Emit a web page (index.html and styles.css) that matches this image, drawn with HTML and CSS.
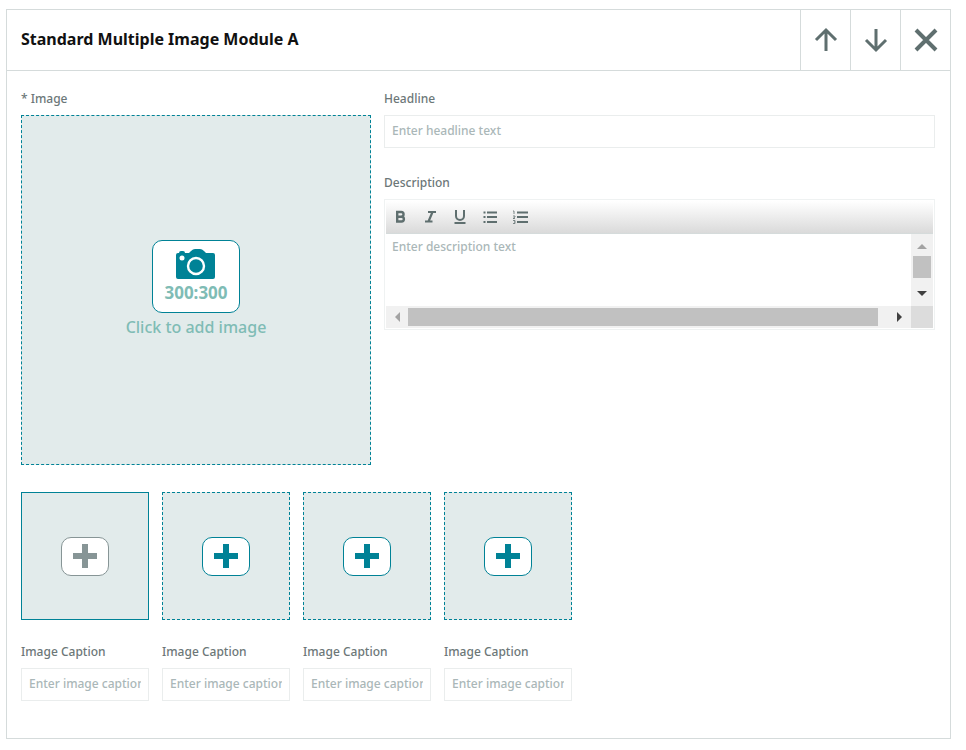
FILE: index.html
```html
<!DOCTYPE html>
<html lang="en">
<head>
<meta charset="utf-8">
<meta name="viewport" content="width=device-width, initial-scale=1">
<title>Standard Multiple Image Module A</title>
<link rel="stylesheet" href="styles.css">
</head>
<body>
<section class="module">
  <header class="module-header">
    <h1 class="module-title">Standard Multiple Image Module A</h1>
    <button class="header-button" type="button" aria-label="Move up">
      <svg width="24" height="26" viewBox="0 0 24 26"><path d="M12 24V3M2 13L12 3l10 10" fill="none" stroke="currentColor" stroke-width="3"/></svg>
    </button>
    <button class="header-button" type="button" aria-label="Move down">
      <svg width="24" height="26" viewBox="0 0 24 26"><path d="M12 2v21M2 13l10 10 10-10" fill="none" stroke="currentColor" stroke-width="3"/></svg>
    </button>
    <button class="header-button" type="button" aria-label="Remove module">
      <svg width="24" height="26" viewBox="0 0 24 26"><path d="M2 3l20 20M22 3L2 23" fill="none" stroke="currentColor" stroke-width="4"/></svg>
    </button>
  </header>

  <div class="module-body">
    <div class="main-row">
      <div class="image-column">
        <label class="field-label" for="main-image">* Image</label>
        <button class="image-drop" id="main-image" type="button">
          <span class="size-badge">
            <svg width="40" height="32" viewBox="0 0 40 32">
              <path d="M3 4q0-2 2-2h2q2 0 2 2h4l2-2q2-2 4-2h5q2 0 4 2l2 2h7q2 0 2 2v22q0 2-2 2H2q-2 0-2-2V6q0-2 2-2z" fill="#008296"/>
              <circle cx="20" cy="17" r="8" fill="none" stroke="#fff" stroke-width="2.400"/>
              <circle cx="6" cy="9" r="2.500" fill="#fff"/>
            </svg>
            <span class="size-text">300:300</span>
          </span>
          <span class="drop-text">Click to add image</span>
        </button>
      </div>

      <div class="text-column">
        <div class="field">
          <label class="field-label" for="headline">Headline</label>
          <input class="text-input" id="headline" type="text" placeholder="Enter headline text">
        </div>
        <div class="field">
          <label class="field-label" for="description">Description</label>
          <div class="editor">
            <div class="toolbar">
              <button class="tool" type="button" aria-label="Bold">
                <svg width="16" height="16" viewBox="0 0 16 16"><path d="M5.200 3h4a2.200 2.200 0 0 1 0 4.700h-4zM5.200 7.700h4.300a2.400 2.400 0 0 1 0 4.800H5.200z" fill="none" stroke="currentColor" stroke-width="2.400"/></svg>
              </button>
              <button class="tool" type="button" aria-label="Italic">
                <svg width="16" height="16" viewBox="0 0 16 16"><path d="M6 3h8M3 12.500h7.500M10.500 3L6.500 12.500" fill="none" stroke="currentColor" stroke-width="2.200"/></svg>
              </button>
              <button class="tool" type="button" aria-label="Underline">
                <svg width="16" height="16" viewBox="0 0 16 16"><path d="M4 1v6a4 4 0 0 0 8 0V1" fill="none" stroke="currentColor" stroke-width="2"/><path d="M2.500 14h11" stroke="currentColor" stroke-width="2"/></svg>
              </button>
              <button class="tool" type="button" aria-label="Bulleted list">
                <svg width="16" height="16" viewBox="0 0 16 16"><path d="M1.500 3.500h2M1.500 8h2M1.500 13h2M5 3.500h10M5 8h10M5 13h10" stroke="currentColor" stroke-width="2"/></svg>
              </button>
              <button class="tool" type="button" aria-label="Numbered list">
                <svg width="16" height="16" viewBox="0 0 16 16"><path d="M5 3.500h11M5 8h11M5 13h11" stroke="currentColor" stroke-width="2"/><path d="M1 2h1v3M1 7h2v1l-2 1.500h2M1 11.500h2v3H1M3 13H2" fill="none" stroke="currentColor" stroke-width=".8"/></svg>
              </button>
            </div>
            <div class="edit-area">
              <textarea class="edit-text" id="description" placeholder="Enter description text"></textarea>
              <div class="scroll-y">
                <svg width="10" height="5" viewBox="0 0 10 5"><path d="M0 5l5-5 5 5z" fill="#a3a3a3"/></svg>
                <div class="thumb-y"></div>
                <svg width="10" height="5" viewBox="0 0 10 5"><path d="M0 0l5 5 5-5z" fill="#404040"/></svg>
              </div>
              <div class="scroll-x">
                <svg width="5" height="10" viewBox="0 0 5 10"><path d="M5 0L0 5l5 5z" fill="#a3a3a3"/></svg>
                <div class="thumb-x"></div>
                <svg width="5" height="10" viewBox="0 0 5 10"><path d="M0 0l5 5-5 5z" fill="#404040"/></svg>
              </div>
              <div class="scroll-corner"></div>
            </div>
          </div>
        </div>
      </div>
    </div>

    <div class="thumb-row">
      <div class="thumb-item">
        <button class="thumb thumb-selected" type="button" aria-label="Add image 1"><span class="plus"><svg width="24" height="24" viewBox="0 0 24 24"><path d="M12 0v24M0 12h24" stroke="currentColor" stroke-width="6"/></svg></span></button>
        <label class="field-label" for="caption-1">Image Caption</label>
        <input class="text-input" id="caption-1" type="text" placeholder="Enter image caption">
      </div>
      <div class="thumb-item">
        <button class="thumb" type="button" aria-label="Add image 2"><span class="plus"><svg width="24" height="24" viewBox="0 0 24 24"><path d="M12 0v24M0 12h24" stroke="currentColor" stroke-width="6"/></svg></span></button>
        <label class="field-label" for="caption-2">Image Caption</label>
        <input class="text-input" id="caption-2" type="text" placeholder="Enter image caption">
      </div>
      <div class="thumb-item">
        <button class="thumb" type="button" aria-label="Add image 3"><span class="plus"><svg width="24" height="24" viewBox="0 0 24 24"><path d="M12 0v24M0 12h24" stroke="currentColor" stroke-width="6"/></svg></span></button>
        <label class="field-label" for="caption-3">Image Caption</label>
        <input class="text-input" id="caption-3" type="text" placeholder="Enter image caption">
      </div>
      <div class="thumb-item">
        <button class="thumb" type="button" aria-label="Add image 4"><span class="plus"><svg width="24" height="24" viewBox="0 0 24 24"><path d="M12 0v24M0 12h24" stroke="currentColor" stroke-width="6"/></svg></span></button>
        <label class="field-label" for="caption-4">Image Caption</label>
        <input class="text-input" id="caption-4" type="text" placeholder="Enter image caption">
      </div>
    </div>
  </div>
</section>
</body>
</html>
```
FILE: styles.css
```css
* {
  box-sizing: border-box;
}

body {
  margin: 9px 15px 12px 6px;
  background: #fff;
  color: #6c7778;
  font-family: "Noto Sans", "Open Sans", sans-serif;
  font-size: 12px;
  font-weight: 500;
}

button,
input,
textarea {
  margin: 0;
  font: inherit;
}

svg {
  display: block;
  flex: none;
}

.module {
  border: 1px solid #d5dbdb;
}

.module-header {
  display: flex;
  height: 61px;
  border-bottom: 1px solid #d5dbdb;
}

.module-title {
  flex: 1;
  margin: 0;
  padding: 0 14px;
  color: #111;
  font-size: 16px;
  font-weight: 700;
  line-height: 58px;
}

.header-button {
  display: flex;
  align-items: center;
  justify-content: center;
  width: 50px;
  padding: 0;
  border: 0;
  border-left: 1px solid #d5dbdb;
  background: #fff;
  color: #5f6f6f;
}

.module-body {
  padding: 19px 15px 37px 14px;
}

.main-row {
  display: flex;
  gap: 13px;
}

.image-column {
  flex: none;
  width: 350px;
}

.text-column {
  flex: 1;
  display: flex;
  flex-direction: column;
  gap: 26px;
  min-width: 0;
}

.field-label {
  display: block;
  margin-bottom: 7px;
  line-height: 18px;
}

.image-drop {
  display: flex;
  flex-direction: column;
  align-items: center;
  justify-content: center;
  width: 100%;
  aspect-ratio: 1;
  padding: 0;
  border: 1px dashed #008296;
  background: #e2ebeb;
}

.size-badge {
  display: flex;
  flex-direction: column;
  align-items: center;
  width: 88px;
  height: 73px;
  padding-top: 8px;
  border: 1px solid #008296;
  border-radius: 10px;
  background: #fff;
}

.size-text {
  color: #7fbcb5;
  font-size: 17px;
  font-weight: 700;
  line-height: 24px;
}

.drop-text {
  color: #7fbcb5;
  font-size: 16px;
  line-height: 28px;
}

.text-input {
  display: block;
  width: 100%;
  height: 33px;
  padding: 0 7px 3px;
  border: 1px solid #eaeded;
  background: #fff;
}

.text-input::placeholder,
.edit-text::placeholder {
  color: #aab7b8;
  opacity: 1;
}

.editor {
  padding: 1px;
  border: 1px solid #eff2f2;
}

.toolbar {
  display: flex;
  align-items: center;
  gap: 14px;
  height: 33px;
  padding: 0 6px;
  border-bottom: 1px solid #d5dbdb;
  background: linear-gradient(#fff, #dadada);
}

.tool {
  padding: 0;
  border: 0;
  background: none;
  color: #5f6f6f;
}

.edit-area {
  display: grid;
  grid-template-columns: 1fr 22px;
  grid-template-rows: 72px 22px;
}

.edit-text {
  width: 100%;
  padding: 4px 6px;
  border: 0;
  background: #fff;
  line-height: 18px;
  overflow: hidden;
  resize: none;
}

.scroll-y,
.scroll-x {
  display: flex;
  align-items: center;
  justify-content: space-between;
  background: #f1f1f1;
}

.scroll-y {
  flex-direction: column;
  padding: 10px 0;
}

.scroll-x {
  gap: 8px;
  padding: 0 9px;
}

.thumb-y {
  width: 18px;
  height: 22px;
  margin-bottom: 6px;
  background: #c1c1c1;
}

.thumb-x {
  flex: 1;
  height: 18px;
  margin-right: 11px;
  background: #c1c1c1;
}

.scroll-corner {
  background: #dcdcdc;
}

.thumb-row {
  display: flex;
  flex-wrap: wrap;
  gap: 13px;
  margin-top: 27px;
}

.thumb-item {
  width: 128px;
}

.thumb {
  display: flex;
  align-items: center;
  justify-content: center;
  width: 100%;
  aspect-ratio: 1;
  margin-bottom: 23px;
  padding: 0;
  border: 1px dashed #008296;
  background: #e2ebeb;
  color: #008296;
}

.thumb-selected {
  border: 1px solid #008296;
  color: #879596;
}

.plus {
  display: flex;
  align-items: center;
  justify-content: center;
  width: 48px;
  height: 39px;
  border: 1px solid;
  border-radius: 10px;
  background: #fff;
}
```
